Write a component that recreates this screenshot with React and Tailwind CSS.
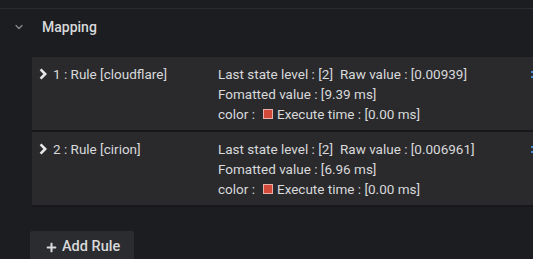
import { FaPlus } from "react-icons/fa";

const rules = [
  { id: 1, name: "cloudflare", level: 2, raw: "0.00939", formatted: "9.39 ms", exec: "0.00 ms" },
  { id: 2, name: "cirion", level: 2, raw: "0.006961", formatted: "6.96 ms", exec: "0.00 ms" },
];

function RuleCard({ rule }) {
  return (
    <div className="flex bg-[#2a2a2d] pt-[7px] pb-[6px] shadow-[0_2px_0_#17181b] mb-[2px] h-[73px]">
      <div className="w-[186px] shrink-0 flex items-start pl-[7px] pt-[2px]">
        <svg width="8" height="12" viewBox="0 0 8 12" className="mt-[2px] shrink-0">
          <path d="M1.6 1.4 L6.2 6 L1.6 10.6" fill="none" stroke="#e6e6e8" strokeWidth="2.6" />
        </svg>
        <span className="ml-[6px] leading-[16px]">
          {rule.id} : Rule [{rule.name}]
        </span>
      </div>
      <div className="w-[313px] shrink-0 leading-[20px]">
        <div>
          Last state level : [{rule.level}]<span className="ml-[7px]">Raw value : [{rule.raw}]</span>
        </div>
        <div>Fomatted value : [{rule.formatted}]</div>
        <div className="flex items-center">
          <span>color :</span>
          <span className="ml-[8px] w-[10px] h-[10px] bg-[#d44a3a] border border-[#e8b0aa]" />
          <span className="ml-[4px]">Execute time : [{rule.exec}]</span>
        </div>
      </div>
      {/* actions icon, cut off at the right edge */}
      <div className="flex flex-col gap-[3px] pt-[7px]">
        <span className="w-[2px] h-[2px] bg-[#3d85d8]" />
        <span className="w-[2px] h-[2px] bg-[#3d85d8]" />
      </div>
    </div>
  );
}

export default function App() {
  return (
    <div className="w-[533px] h-[259px] overflow-hidden bg-[#1b1d21] pt-2 text-[#d8d9da] text-[13.5px] font-['Roboto','Liberation_Sans',sans-serif]">
      <div className="border-t border-[#2a2c31]">
        {/* Section header */}
        <div className="flex items-center h-[36px] pl-[13px]">
          <svg width="12" height="12" viewBox="0 0 24 24" className="shrink-0">
            <path d="M6 9l6 6 6-6" fill="none" stroke="#8a8b8f" strokeWidth="2.4" strokeLinecap="round" strokeLinejoin="round" />
          </svg>
          <span className="ml-[17px] text-[14px] font-medium text-[#d8d9da]">Mapping</span>
        </div>

        {/* Rules */}
        <div className="mt-3 ml-8 w-[560px]">
          {rules.map((r) => (
            <RuleCard key={r.id} rule={r} />
          ))}
        </div>

        {/* Add rule */}
        <button className="mt-[26px] ml-[30px] h-8 pl-4 pr-[14px] flex items-center bg-[#2b2c30] text-[#d8d9da] text-[14.5px] font-medium rounded-t-[2px]">
          <FaPlus className="w-[11px] h-[11px] mr-[5px]" />
          Add Rule
        </button>
      </div>
    </div>
  );
}
